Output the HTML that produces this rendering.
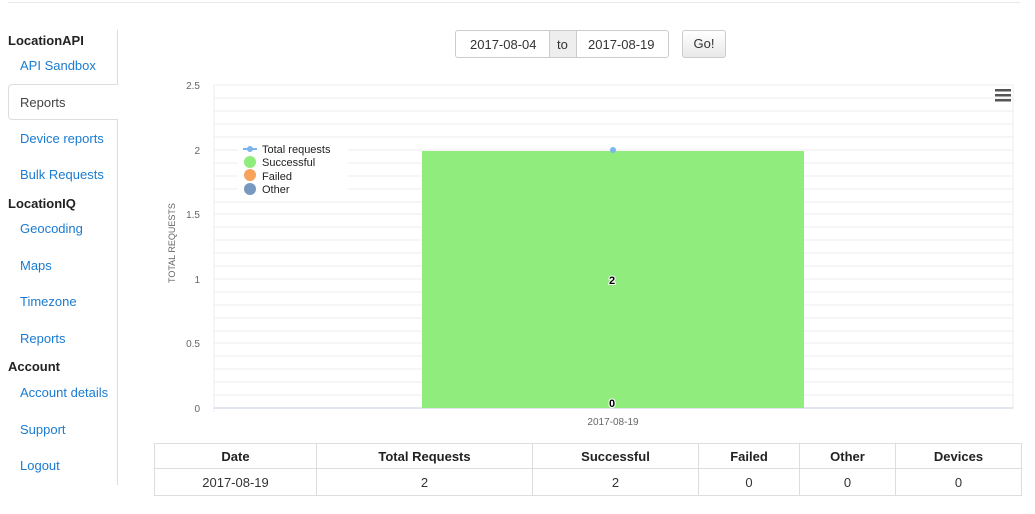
<!DOCTYPE html>
<html><head><style>
body{margin:0;width:1035px;height:514px;background:#fff;font-family:"Liberation Sans",sans-serif;font-size:13px;position:relative;overflow:hidden;color:#333}
.a{position:absolute;white-space:nowrap}
.h{font-weight:bold;color:#222;left:8px}
.l{color:#1a7bd1;left:20px}
table{position:absolute;left:154px;top:443px;border-collapse:collapse;width:868px;font-size:13px}
td,th{border:1px solid #ddd;text-align:center;height:24px;padding:0}
th{color:#222}
</style></head><body>
<div class="a" style="left:8px;top:2px;width:1012px;height:1px;background:#e8e8e8"></div>
<div class="a" style="left:117px;top:30px;width:1px;height:455px;background:#ddd"></div>
<div class="a" style="left:8px;top:84px;width:109px;height:34px;border:1px solid #ddd;border-right:none;border-radius:4px 0 0 4px;background:#fff"></div>
<div class="a h" style="top:33px">LocationAPI</div>
<div class="a l" style="top:58px">API Sandbox</div>
<div class="a" style="left:20px;top:95px;color:#444">Reports</div>
<div class="a l" style="top:131px">Device reports</div>
<div class="a l" style="top:167px">Bulk Requests</div>
<div class="a h" style="top:196px">LocationIQ</div>
<div class="a l" style="top:221px">Geocoding</div>
<div class="a l" style="top:258px">Maps</div>
<div class="a l" style="top:294px">Timezone</div>
<div class="a l" style="top:331px">Reports</div>
<div class="a h" style="top:359px">Account</div>
<div class="a l" style="top:385px">Account details</div>
<div class="a l" style="top:422px">Support</div>
<div class="a l" style="top:458px">Logout</div>

<div class="a" style="left:455px;top:30px;width:212px;height:26px;border:1px solid #ccc;border-radius:3px"></div>
<div class="a" style="left:549px;top:31px;width:26px;height:26px;background:#eee;border-left:1px solid #ccc;border-right:1px solid #ccc"></div>
<div class="a" style="left:470px;top:37px">2017-08-04</div>
<div class="a" style="left:557px;top:37px">to</div>
<div class="a" style="left:588px;top:37px">2017-08-19</div>
<div class="a" style="left:682px;top:30px;width:42px;height:26px;border:1px solid #ccc;border-radius:3px;background:linear-gradient(#fff,#e8e8e8);text-align:center;line-height:26px">Go!</div>

<svg class="a" style="left:0;top:0" width="1035" height="440" font-family="Liberation Sans" font-size="10" fill="#666">
<g stroke="#ececec">
<line x1="214" x2="1013" y1="85" y2="85"/><line x1="214" x2="1013" y1="98" y2="98"/><line x1="214" x2="1013" y1="111" y2="111"/><line x1="214" x2="1013" y1="124" y2="124"/><line x1="214" x2="1013" y1="137" y2="137"/><line x1="214" x2="1013" y1="150" y2="150"/><line x1="214" x2="1013" y1="163" y2="163"/><line x1="214" x2="1013" y1="176" y2="176"/><line x1="214" x2="1013" y1="189" y2="189"/><line x1="214" x2="1013" y1="202" y2="202"/><line x1="214" x2="1013" y1="214" y2="214"/><line x1="214" x2="1013" y1="227" y2="227"/><line x1="214" x2="1013" y1="240" y2="240"/><line x1="214" x2="1013" y1="253" y2="253"/><line x1="214" x2="1013" y1="266" y2="266"/><line x1="214" x2="1013" y1="279" y2="279"/><line x1="214" x2="1013" y1="292" y2="292"/><line x1="214" x2="1013" y1="305" y2="305"/><line x1="214" x2="1013" y1="318" y2="318"/><line x1="214" x2="1013" y1="331" y2="331"/><line x1="214" x2="1013" y1="343" y2="343"/><line x1="214" x2="1013" y1="356" y2="356"/><line x1="214" x2="1013" y1="369" y2="369"/><line x1="214" x2="1013" y1="382" y2="382"/><line x1="214" x2="1013" y1="395" y2="395"/>
<line x1="214" x2="214" y1="85" y2="412"/><line x1="1013" x2="1013" y1="85" y2="408"/>
</g>
<line x1="214" x2="1013" y1="408" y2="408" stroke="#c0cbe0"/>
<rect x="422" y="151" width="382" height="257" fill="#90ed7d"/>
<rect x="238" y="138" width="110" height="60" fill="#fff"/>
<line x1="243" x2="257" y1="149" y2="149" stroke="#7cb5ec" stroke-width="2"/><circle cx="250" cy="149" r="3" fill="#7cb5ec"/>
<circle cx="250" cy="162" r="6" fill="#90ed7d"/><circle cx="250" cy="175" r="6" fill="#f7a35c"/><circle cx="250" cy="189" r="6" fill="#7798bf"/>
<g fill="#222" font-size="11"><text x="262" y="153">Total requests</text><text x="262" y="166">Successful</text><text x="262" y="180">Failed</text><text x="262" y="193">Other</text></g>
<circle cx="613" cy="150" r="3" fill="#7cb5ec"/>
<text x="200" y="89" text-anchor="end">2.5</text><text x="200" y="154" text-anchor="end">2</text><text x="200" y="218" text-anchor="end">1.5</text><text x="200" y="283" text-anchor="end">1</text><text x="200" y="347" text-anchor="end">0.5</text><text x="200" y="412" text-anchor="end">0</text>
<text transform="translate(175,283) rotate(-90)" font-size="9">TOTAL REQUESTS</text>
<text x="613" y="425" text-anchor="middle">2017-08-19</text>
<g font-weight="bold" fill="#000" font-size="11" text-anchor="middle" stroke="#fff" stroke-width="2" paint-order="stroke"><text x="612" y="284">2</text><text x="612" y="407">0</text></g>
<g fill="#555"><rect x="995" y="89" width="16" height="2.5"/><rect x="995" y="94" width="16" height="2.5"/><rect x="995" y="99" width="16" height="2.5"/></g>
</svg>

<table><tr><th style="width:161px">Date</th><th style="width:215px">Total Requests</th><th style="width:165px">Successful</th><th style="width:100px">Failed</th><th style="width:95px">Other</th><th>Devices</th></tr>
<tr style="height:27px"><td>2017-08-19</td><td>2</td><td>2</td><td>0</td><td>0</td><td>0</td></tr></table>
</body></html>
